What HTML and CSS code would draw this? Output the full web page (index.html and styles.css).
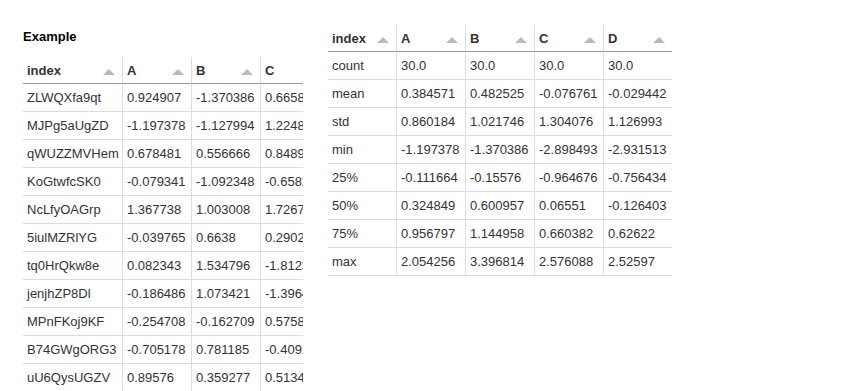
FILE: index.html
```html
<!DOCTYPE html>
<html>
<head>
<meta charset="utf-8">
<link rel="stylesheet" href="styles.css">
</head>
<body>
<div class="page">
  <div class="left">
    <div class="title">Example</div>
    <div class="grid grid-left">
      <div class="hcell"><span>index</span><i class="arrow"></i></div>
      <div class="hcell"><span>A</span><i class="arrow"></i></div>
      <div class="hcell"><span>B</span><i class="arrow"></i></div>
      <div class="hcell"><span>C</span><i class="arrow"></i></div>

      <div class="cell">ZLWQXfa9qt</div><div class="cell">0.924907</div><div class="cell">-1.370386</div><div class="cell">0.665812</div>
      <div class="cell">MJPg5aUgZD</div><div class="cell">-1.197378</div><div class="cell">-1.127994</div><div class="cell">1.224853</div>
      <div class="cell">qWUZZMVHem</div><div class="cell">0.678481</div><div class="cell">0.556666</div><div class="cell">0.848921</div>
      <div class="cell">KoGtwfcSK0</div><div class="cell">-0.079341</div><div class="cell">-1.092348</div><div class="cell">-0.658231</div>
      <div class="cell">NcLfyOAGrp</div><div class="cell">1.367738</div><div class="cell">1.003008</div><div class="cell">1.726734</div>
      <div class="cell">5iulMZRlYG</div><div class="cell">-0.039765</div><div class="cell">0.6638</div><div class="cell">0.290264</div>
      <div class="cell">tq0HrQkw8e</div><div class="cell">0.082343</div><div class="cell">1.534796</div><div class="cell">-1.812349</div>
      <div class="cell">jenjhZP8Dl</div><div class="cell">-0.186486</div><div class="cell">1.073421</div><div class="cell">-1.396417</div>
      <div class="cell">MPnFKoj9KF</div><div class="cell">-0.254708</div><div class="cell">-0.162709</div><div class="cell">0.575843</div>
      <div class="cell">B74GWgORG3</div><div class="cell">-0.705178</div><div class="cell">0.781185</div><div class="cell">-0.409126</div>
      <div class="cell">uU6QysUGZV</div><div class="cell">0.89576</div><div class="cell">0.359277</div><div class="cell">0.513472</div>
    </div>
  </div>

  <div class="right">
    <div class="grid grid-right">
      <div class="hcell"><span>index</span><i class="arrow"></i></div>
      <div class="hcell"><span>A</span><i class="arrow"></i></div>
      <div class="hcell"><span>B</span><i class="arrow"></i></div>
      <div class="hcell"><span>C</span><i class="arrow"></i></div>
      <div class="hcell last"><span>D</span><i class="arrow"></i></div>

      <div class="cell">count</div><div class="cell">30.0</div><div class="cell">30.0</div><div class="cell">30.0</div><div class="cell last">30.0</div>
      <div class="cell">mean</div><div class="cell">0.384571</div><div class="cell">0.482525</div><div class="cell">-0.076761</div><div class="cell last">-0.029442</div>
      <div class="cell">std</div><div class="cell">0.860184</div><div class="cell">1.021746</div><div class="cell">1.304076</div><div class="cell last">1.126993</div>
      <div class="cell">min</div><div class="cell">-1.197378</div><div class="cell">-1.370386</div><div class="cell">-2.898493</div><div class="cell last">-2.931513</div>
      <div class="cell">25%</div><div class="cell">-0.111664</div><div class="cell">-0.15576</div><div class="cell">-0.964676</div><div class="cell last">-0.756434</div>
      <div class="cell">50%</div><div class="cell">0.324849</div><div class="cell">0.600957</div><div class="cell">0.06551</div><div class="cell last">-0.126403</div>
      <div class="cell">75%</div><div class="cell">0.956797</div><div class="cell">1.144958</div><div class="cell">0.660382</div><div class="cell last">0.62622</div>
      <div class="cell">max</div><div class="cell">2.054256</div><div class="cell">3.396814</div><div class="cell">2.576088</div><div class="cell last">2.52597</div>
    </div>
  </div>
</div>
</body>
</html>
```

FILE: styles.css
```css
html, body {
  margin: 0;
  padding: 0;
  background: #fff;
  overflow: hidden;
}

body {
  font-family: "Liberation Sans", Arial, sans-serif;
  font-size: 13px;
  color: #333;
}

.page {
  display: flex;
  align-items: flex-start;
  gap: 25px;
  padding: 25px 0 0 23px;
}

.left {
  width: 280px;
  overflow: hidden;
  flex: none;
}

.title {
  font-weight: bold;
  color: #000;
  line-height: 16px;
  margin-top: 4px;
  margin-bottom: 12px;
}

.right {
  flex: none;
}

.grid {
  display: grid;
}

.grid-left {
  grid-template-columns: 100px 69px 69px 69px;
  width: 307px;
}

.grid-right {
  grid-template-columns: 69px 69px 69px 69px 68px;
}

.hcell {
  box-sizing: border-box;
  height: 27px;
  border-right: 1px solid #ddd;
  border-bottom: 1px solid #999;
  display: flex;
  align-items: center;
  justify-content: space-between;
  padding: 0 7px 0 4px;
  font-weight: bold;
  white-space: nowrap;
}

.arrow {
  display: block;
  width: 0;
  height: 0;
  border-left: 6px solid transparent;
  border-right: 6px solid transparent;
  border-bottom: 6px solid #bbb;
  margin-top: 3px;
}

.cell {
  box-sizing: border-box;
  height: 28px;
  line-height: 27px;
  border-right: 1px solid #ddd;
  border-bottom: 1px solid #ddd;
  padding: 0 4px;
  white-space: nowrap;
  overflow: hidden;
}

.last {
  border-right: none;
}
```
